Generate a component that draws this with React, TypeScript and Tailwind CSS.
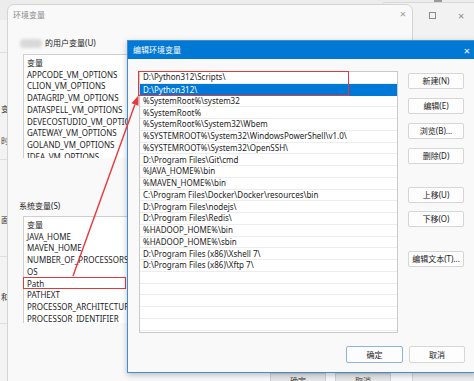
import React from "react";

const userVars = [
  "APPCODE_VM_OPTIONS",
  "CLION_VM_OPTIONS",
  "DATAGRIP_VM_OPTIONS",
  "DATASPELL_VM_OPTIONS",
  "DEVECOSTUDIO_VM_OPTIONS",
  "GATEWAY_VM_OPTIONS",
  "GOLAND_VM_OPTIONS",
  "IDEA_VM_OPTIONS",
];

const sysVars = [
  "JAVA_HOME",
  "MAVEN_HOME",
  "NUMBER_OF_PROCESSORS",
  "OS",
  "Path",
  "PATHEXT",
  "PROCESSOR_ARCHITECTURE",
  "PROCESSOR_IDENTIFIER",
];

const paths = [
  "D:\\Python312\\Scripts\\",
  "D:\\Python312\\",
  "%SystemRoot%\\system32",
  "%SystemRoot%",
  "%SystemRoot%\\System32\\Wbem",
  "%SYSTEMROOT%\\System32\\WindowsPowerShell\\v1.0\\",
  "%SYSTEMROOT%\\System32\\OpenSSH\\",
  "D:\\Program Files\\Git\\cmd",
  "%JAVA_HOME%\\bin",
  "%MAVEN_HOME%\\bin",
  "C:\\Program Files\\Docker\\Docker\\resources\\bin",
  "D:\\Program Files\\nodejs\\",
  "D:\\Program Files\\Redis\\",
  "%HADOOP_HOME%\\bin",
  "%HADOOP_HOME%\\sbin",
  "D:\\Program Files (x86)\\Xshell 7\\",
  "D:\\Program Files (x86)\\Xftp 7\\",
  "",
  "",
  "",
  "",
  "",
];

function Btn({ label, focused = false, className = "" }: { label: string; focused?: boolean; className?: string }) {
  return (
    <div
      className={
        "flex h-[16px] w-[56px] items-center justify-center rounded-[2px] border bg-[#fdfdfd] text-[8px] text-[#1b1b1b] " +
        (focused ? "border-[#8db4dc] " : "border-[#d6d6d6] ") +
        className
      }
    >
      {label}
    </div>
  );
}

function VarList({ items, highlight }: { items: string[]; highlight?: string }) {
  return (
    <div className="ml-[4px] flex w-[380px] flex-col border border-[#cfcfcf] bg-white pt-[2px]">
      <div className="flex h-[11.75px] items-center pl-[3px] text-[8px] leading-none text-[#1b1b1b]">变量</div>
      {items.map((v) => (
        <div key={v} className="relative flex h-[11.75px] items-center pl-[3px] text-[8px] leading-none text-[#1b1b1b]">
          {v}
          {v === highlight && (
            <div className="absolute left-[-1px] top-[-0.5px] h-[12px] w-[103px] border-[1.5px] border-[#e0393e]" />
          )}
        </div>
      ))}
    </div>
  );
}

export default function App() {
  return (
    <div className="relative h-[381px] w-[474px] overflow-hidden bg-[#ececec] font-['Noto_Sans','Noto_Sans_CJK_SC',sans-serif]">
      {/* far-left back window strip */}
      <div className="absolute left-0 top-[20px] flex h-[361px] w-[8px] flex-col bg-[#f3f3f3]">
        <div className="mt-[32px] border-t border-[#dedede]" />
        <div className="mt-[50px] flex h-[12px] justify-end overflow-hidden text-[8px] leading-[12px] text-[#333]">
          <span className="-mr-[1px]">变</span>
        </div>
        <div className="mt-[20px] flex h-[12px] justify-end overflow-hidden text-[8px] leading-[12px] text-[#333]">
          <span className="-mr-[1px]">时</span>
        </div>
        <div className="mt-[12px] border-t border-[#dedede]" />
        <div className="mt-[54px] flex h-[12px] justify-end overflow-hidden text-[8px] leading-[12px] text-[#333]">
          <span className="-mr-[1px]">面</span>
        </div>
        <div className="mt-[30px] border-t border-[#dedede]" />
        <div className="mt-[34px] flex h-[12px] justify-end overflow-hidden text-[8px] leading-[12px] text-[#333]">
          <span className="-mr-[1px]">和</span>
        </div>
        <div className="mt-[20px] border-t border-[#dedede]" />
      </div>

      {/* top-right back window */}
      <div className="absolute left-[380px] top-[2px] flex h-[40px] w-[100px] items-start rounded-tl-[6px] border border-[#d8d8d8] bg-[#f2f2f2] pt-[8px]">
        <div className="ml-[48px] mt-[1px] h-[7px] w-[7px] border border-[#8a8a8a]" />
        <div className="ml-[22px] text-[11px] leading-[10px] text-[#8a8a8a]">×</div>
      </div>
      <div className="absolute left-[434px] top-0 h-[2px] w-[8px] bg-[#9a9a9a]" />

      {/* 环境变量 window */}
      <div className="absolute left-[7px] top-[4px] flex h-[390px] w-[406px] flex-col rounded-t-[7px] border border-[#d4d4d4] bg-[#f9f9f9]">
        <div className="flex h-[19px] items-center justify-between pl-[5px] pr-[6px]">
          <span className="text-[8px] text-[#8a8a8a]">环境变量</span>
          <span className="text-[11px] text-[#9a9a9a]">×</span>
        </div>
        <div className="flex flex-col pl-[11px]">
          <div className="mt-[13px] flex h-[12px] items-center">
            <div className="ml-[1px] h-[9px] w-[22px] rounded-[4px] bg-[#d9d9d9] blur-[1.5px]" />
            <span className="ml-[3px] text-[8px] text-[#1b1b1b]">的用户变量(U)</span>
          </div>
          <div className="mt-[5px] h-[104px] overflow-hidden">
            <VarList items={userVars} />
          </div>
          <div className="mt-[42px] flex h-[12px] items-center text-[8px] text-[#1b1b1b]">系统变量(S)</div>
          <div className="mt-[4px] h-[107px] overflow-hidden">
            <VarList items={sysVars} highlight="Path" />
          </div>
          <div className="mt-[50px] flex gap-[9px] pl-[251px]">
            <div className="flex h-[16px] w-[56px] items-center justify-center border border-[#cfcfcf] bg-[#e6e6e6] text-[8px] text-[#333]">确定</div>
            <div className="flex h-[16px] w-[56px] items-center justify-center border border-[#cfcfcf] bg-[#e6e6e6] text-[8px] text-[#333]">取消</div>
          </div>
        </div>
      </div>

      {/* 编辑环境变量 dialog */}
      <div className="absolute left-[127px] top-[40px] flex h-[333px] w-[350px] flex-col border border-[#3d8fd8] bg-[#f9f9f9] shadow-[0_2px_6px_rgba(0,0,0,0.25)]">
        <div className="flex h-[18px] items-center justify-between bg-[#0078d4] pl-[5px] pr-[6px]">
          <span className="text-[8px] text-white">编辑环境变量</span>
          <span className="text-[11px] leading-none text-white">×</span>
        </div>
        <div className="flex pl-[11px] pt-[12px]">
          <div className="flex h-[262px] w-[259px] flex-col overflow-hidden border border-[#c9c9c9] bg-white">
            {paths.map((p, i) => (
              <div
                key={i}
                className={
                  "relative flex h-[11.75px] shrink-0 items-center pl-[3px] text-[8px] leading-none " +
                  (i === 1 ? "bg-[#0078d7] text-white" : "border-b border-[#ededed] text-[#1b1b1b]")
                }
              >
                {p}
              </div>
            ))}
          </div>
          <div className="ml-[10px] mt-[2px] flex flex-col">
            <Btn label="新建(N)" />
            <Btn label="编辑(E)" className="mt-[9px]" />
            <Btn label="浏览(B)..." className="mt-[9px]" />
            <Btn label="删除(D)" className="mt-[9px]" />
            <Btn label="上移(U)" className="mt-[23px]" />
            <Btn label="下移(O)" className="mt-[8px]" />
            <Btn label="编辑文本(T)..." className="mt-[24px]" />
          </div>
        </div>
        <div className="mt-[13px] flex justify-end gap-[6px] pr-[11px]">
          <Btn label="确定" focused className="h-[17px] w-[57px]" />
          <Btn label="取消" className="h-[17px]" />
        </div>
      </div>

      {/* overlays: red box on first two paths, red arrow */}
      <div className="absolute left-[138px] top-[71px] h-[25px] w-[211px] border-[1.5px] border-[#e0393e]" />
      <svg className="pointer-events-none absolute left-0 top-0" width="474" height="381" viewBox="0 0 474 381">
        <line x1="73" y1="276" x2="134.9" y2="104.5" stroke="#e8383d" strokeWidth="1.4" />
        <polygon points="138.5,95.5 138.4,105.8 131.5,103.2" fill="#e8383d" />
      </svg>
    </div>
  );
}
